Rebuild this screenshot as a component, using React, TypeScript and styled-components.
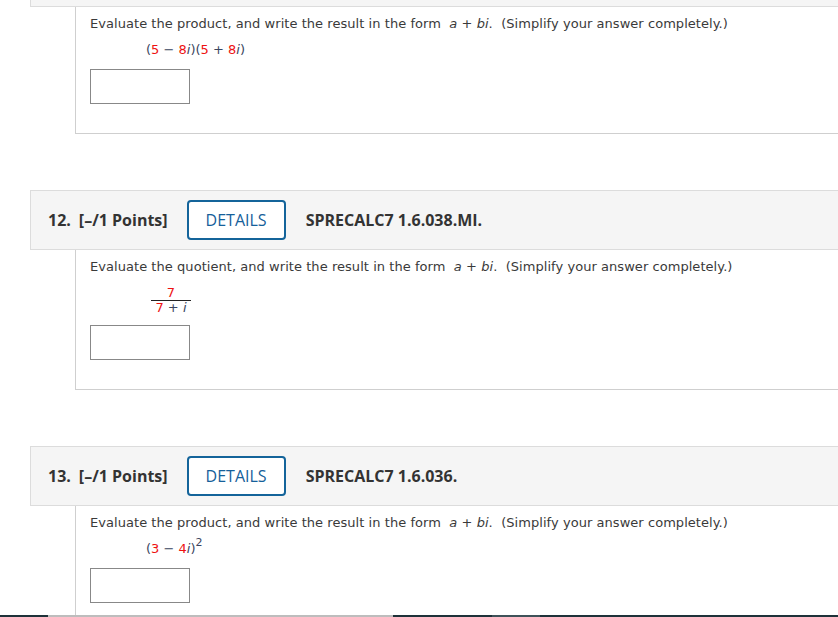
import React from 'react';
import styled, { createGlobalStyle } from 'styled-components';

const GlobalStyle = createGlobalStyle`
  html, body {
    margin: 0;
    padding: 0;
    background: #fff;
    overflow: hidden;
  }
`;

const Page = styled.div`
  width: 838px;
  height: 617px;
  overflow: hidden;
  padding-left: 30px;
  box-sizing: border-box;
`;

const Stack = styled.div`
  margin-top: -53px;
  width: 900px;
`;

const Question = styled.section`
  margin-bottom: 56px;
`;

const Header = styled.div`
  display: flex;
  align-items: center;
  height: 58px;
  border: 1px solid #dcdcdc;
  background: #f5f5f5;
  padding-left: 17px;
  font-family: 'Open Sans', sans-serif;
  font-size: 16px;
  font-weight: 700;
  color: #333;
`;

const Num = styled.span`
  margin-right: 8px;
`;

const Points = styled.span`
  margin-right: 19px;
`;

const DetailsButton = styled.button`
  height: 40px;
  width: 99px;
  box-sizing: border-box;
  border: 2px solid #14649a;
  border-radius: 4px;
  background: #fff;
  color: #15609a;
  font-family: 'Open Sans', sans-serif;
  font-size: 16px;
  font-weight: 500;
  padding: 0;
  margin-right: 20px;
`;

const Source = styled.span``;

const Body = styled.div`
  margin-left: 45px;
  border-left: 1px solid #cfcfcf;
  border-bottom: 1px solid #cfcfcf;
  padding: 8px 0 29px 14px;
  font-family: 'DejaVu Sans', Verdana, sans-serif;
  font-size: 13px;
  color: #3a3a3a;
`;

const Prompt = styled.p`
  margin: 0;
  line-height: 18px;
  letter-spacing: 0.05px;
`;

const Math = styled.div`
  margin: 8px 0 0 56px;
  line-height: 18px;
  color: #3a4560;
`;

const Red = styled.span`
  color: #ee1111;
`;

const Sup = styled.sup`
  font-size: 11px;
  vertical-align: 7px;
  line-height: 0;
`;

const Frac = styled.span`
  display: inline-flex;
  flex-direction: column;
  align-items: center;
  margin-left: 5px;
  line-height: 14px;
`;

const Numerator = styled.span`
  color: #ee1111;
  padding: 0 1px;
  border-bottom: 1px solid #222;
  width: 38px;
  text-align: center;
`;

const Denominator = styled.span`
  width: 38px;
  text-align: center;
`;

const Answer = styled.input`
  display: block;
  width: 100px;
  height: 35px;
  box-sizing: border-box;
  border: 1px solid #888;
  margin-top: 10px;
`;

const BottomBar = styled.div`
  position: fixed;
  left: 0;
  right: 0;
  bottom: 0;
  height: 2px;
  display: flex;
  background: #1e3239;
`;

const BarSeg = styled.div<{ $w: number; $c: string }>`
  width: ${(p) => p.$w}px;
  background: ${(p) => p.$c};
`;

const I = () => <i>i</i>;

const prompt = (kind: string) => (
  <Prompt>
    Evaluate the {kind}, and write the result in the form&nbsp; <i>a</i> + <i>bi</i>.&nbsp; (Simplify your answer
    completely.)
  </Prompt>
);

export default function App() {
  return (
    <>
      <GlobalStyle />
      <Page>
        <Stack>
          <Question>
            {/* header of the previous question, scrolled mostly out of view */}
            <Header />
            <Body>
              {prompt('product')}
              <Math>
                (<Red>5</Red> − <Red>8</Red>
                <I />)(<Red>5</Red> + <Red>8</Red>
                <I />)
              </Math>
              <Answer type="text" />
            </Body>
          </Question>

          <Question>
            <Header>
              <Num>12.</Num>
              <Points>[–/1 Points]</Points>
              <DetailsButton>DETAILS</DetailsButton>
              <Source>SPRECALC7 1.6.038.MI.</Source>
            </Header>
            <Body>
              {prompt('quotient')}
              <Math>
                <Frac>
                  <Numerator>7</Numerator>
                  <Denominator>
                    <Red>7</Red> + <I />
                  </Denominator>
                </Frac>
              </Math>
              <Answer type="text" />
            </Body>
          </Question>

          <Question>
            <Header>
              <Num>13.</Num>
              <Points>[–/1 Points]</Points>
              <DetailsButton>DETAILS</DetailsButton>
              <Source>SPRECALC7 1.6.036.</Source>
            </Header>
            <Body>
              {prompt('product')}
              <Math>
                (<Red>3</Red> − <Red>4</Red>
                <I />)<Sup>2</Sup>
              </Math>
              <Answer type="text" />
            </Body>
          </Question>
        </Stack>
      </Page>
      <BottomBar>
        <BarSeg $w={48} $c="#1e3239" />
        <BarSeg $w={345} $c="#bdbdbd" />
        <BarSeg $w={99} $c="#1e3239" />
        <BarSeg $w={48} $c="#3f5259" />
      </BottomBar>
    </>
  );
}
